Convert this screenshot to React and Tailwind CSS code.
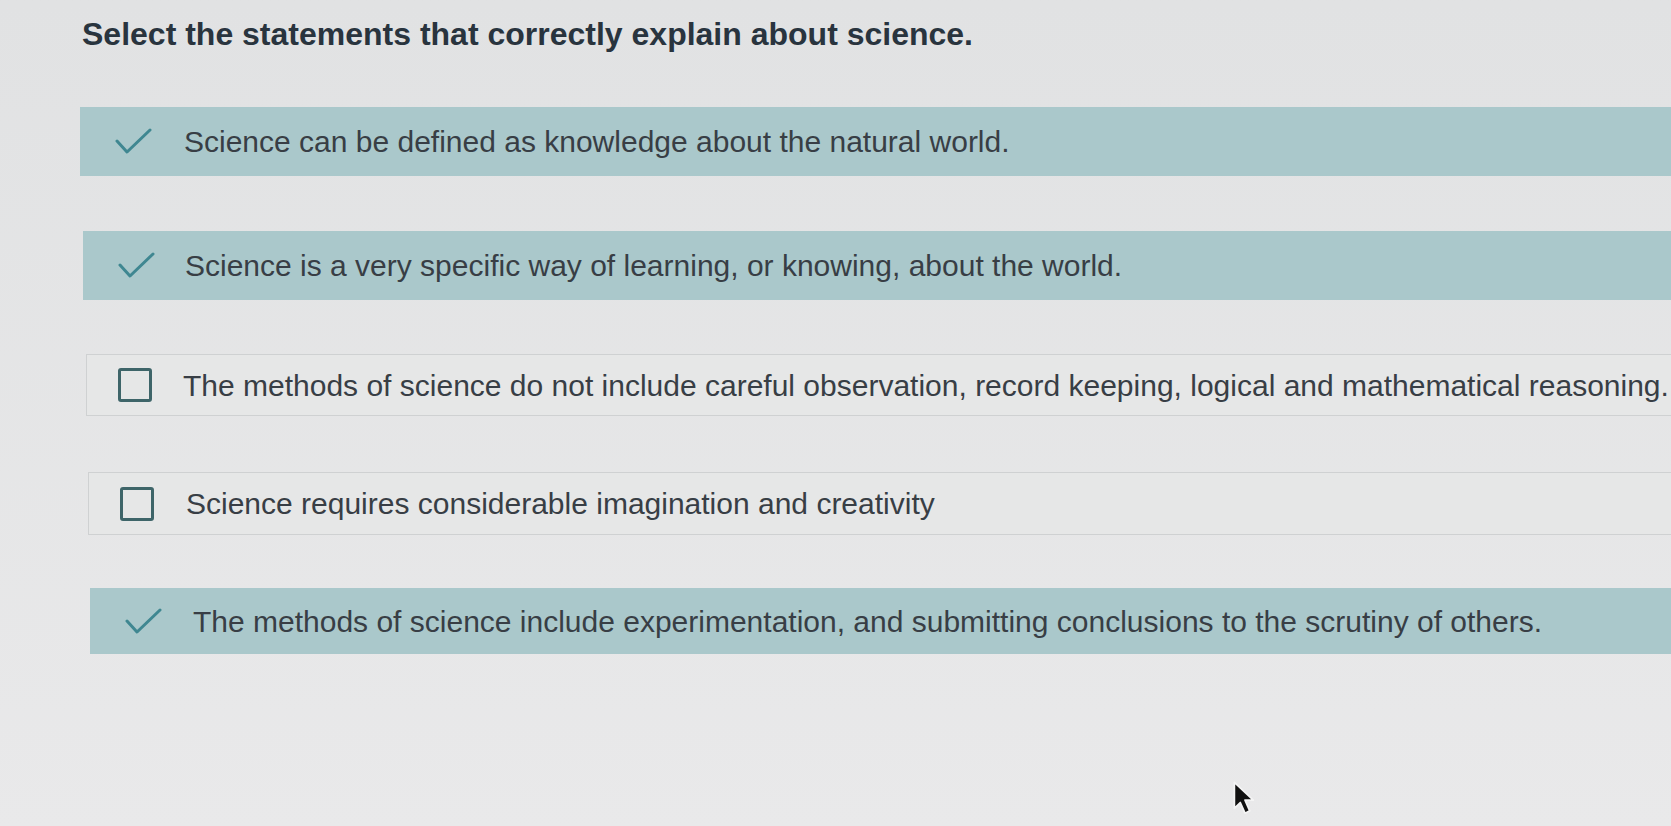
const items = [
  { text: 'Science can be defined as knowledge about the natural world.', checked: true, ml: 'ml-[80px]', h: 'h-[69px]', mt: 'mt-[51px]', gap: 'ml-[32px]' },
  { text: 'Science is a very specific way of learning, or knowing, about the world.', checked: true, ml: 'ml-[83px]', h: 'h-[69px]', mt: 'mt-[55px]', gap: 'ml-[30px]' },
  { text: 'The methods of science do not include careful observation, record keeping, logical and mathematical reasoning.', checked: false, ml: 'ml-[86px]', h: 'h-[62px]', mt: 'mt-[54px]', gap: 'ml-[31px]' },
  { text: 'Science requires considerable imagination and creativity', checked: false, ml: 'ml-[88px]', h: 'h-[63px]', mt: 'mt-[56px]', gap: 'ml-[32px]' },
  { text: 'The methods of science include experimentation, and submitting conclusions to the scrutiny of others.', checked: true, ml: 'ml-[90px]', h: 'h-[66px]', mt: 'mt-[53px]', gap: 'ml-[31px]' },
];

const Check = () => (
  <svg width="37" height="27" viewBox="0 0 37 27" fill="none">
    <path d="M2 13 L12 24 L35 2" stroke="#3f8791" strokeWidth="3" strokeLinecap="round" strokeLinejoin="round" />
  </svg>
);

const Box = () => (
  <div className="w-[34px] h-[34px] rounded-[3px] border-[3px] border-[#3e6569]" />
);

export default function App() {
  return (
    <div className="relative w-full h-[826px] overflow-hidden bg-gradient-to-b from-[#e1e2e3] to-[#e9e9ea] font-['Liberation_Sans',Arial,sans-serif]">
      <h1 className="pl-[82px] pt-[12px] text-[32px] leading-[44px] font-bold text-[#29343e]">
        Select the statements that correctly explain about science.
      </h1>

      {items.map((it, i) => (
        <div
          key={i}
          className={`${it.mt} ${it.ml} ${it.h} flex items-center ${
            it.checked ? 'bg-[#aac8cb] pl-[35px]' : 'bg-[#e6e7e7] border border-[#cfd1d2] border-r-0 pl-[31px]'
          }`}
        >
          <div className="shrink-0 flex">
            {it.checked ? <Check /> : <Box />}
          </div>
          <span className={`${it.gap} text-[30px] text-[#383e45] whitespace-nowrap`}>{it.text}</span>
        </div>
      ))}

      {/* mouse pointer */}
      <svg className="absolute left-[1232px] top-[780px]" width="26" height="38" viewBox="0 0 22 32">
        <path d="M2 2 L2 24 L7 19 L11 28 L15 26 L11 17 L18 17 Z" fill="#111" stroke="#f4f4f4" strokeWidth="1.5" strokeLinejoin="round" />
      </svg>
    </div>
  );
}
